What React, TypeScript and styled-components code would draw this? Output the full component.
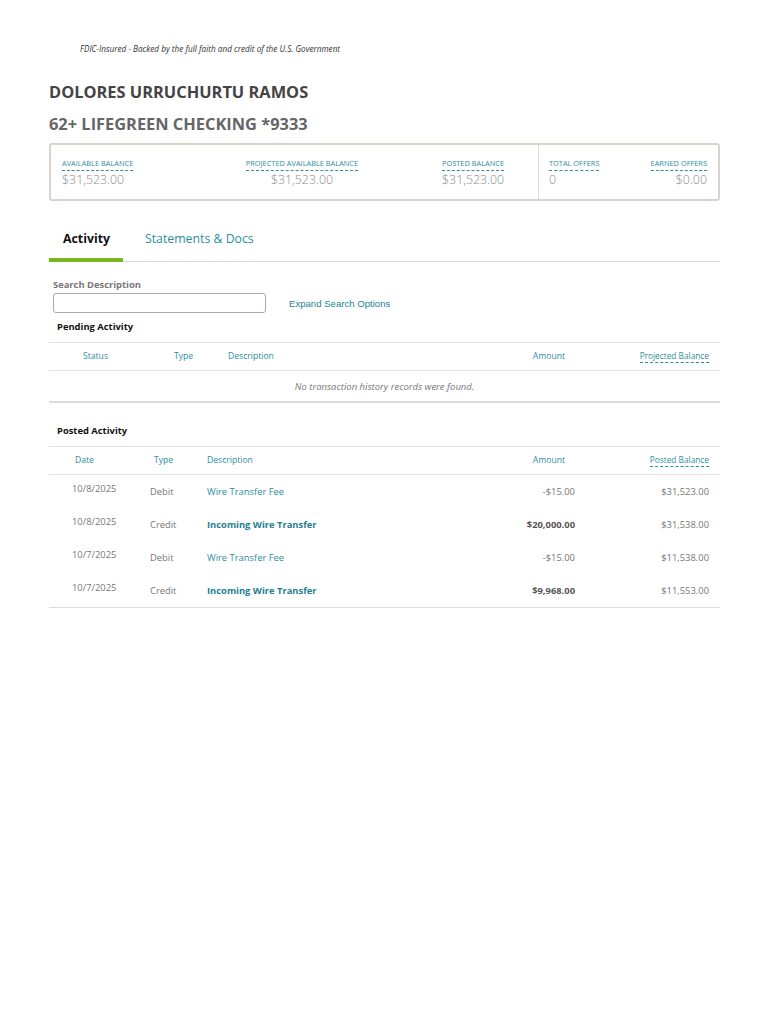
import React from 'react';
import styled, { createGlobalStyle } from 'styled-components';

const GlobalStyle = createGlobalStyle`
  html, body {
    margin: 0;
    padding: 0;
    background: #fff;
    font-family: "Open Sans", "Liberation Sans", sans-serif;
  }
`;

const Page = styled.div`
  width: 768px;
  min-height: 1024px;
  box-sizing: border-box;
  padding: 43px 48px 0 49px;
`;

const Fdic = styled.div`
  font-size: 8.2px;
  font-style: italic;
  color: #333;
  padding-left: 31px;
  line-height: 12px;
`;

const Heading = styled.h1<{ $sub?: boolean }>`
  margin: 0;
  font-size: 16.4px;
  font-weight: 700;
  line-height: 32px;
  color: ${(p) => (p.$sub ? '#666' : '#444')};
`;

const NameHeading = styled(Heading)`
  margin-top: 21px;
`;

const Summary = styled.div`
  margin-top: 3px;
  height: 58px;
  box-sizing: border-box;
  border: 2px solid #d9d3ca;
  border-radius: 3px;
  display: grid;
  grid-template-columns: 487px 1fr;
`;

const SummaryGroup = styled.div<{ $cols: string; $divider?: boolean }>`
  display: grid;
  grid-template-columns: ${(p) => p.$cols};
  align-items: start;
  padding-top: 13px;
  border-left: ${(p) => (p.$divider ? '1px solid #ddd' : 'none')};
`;

const Stat = styled.div<{ $align: string; $pad?: string }>`
  display: flex;
  flex-direction: column;
  align-items: ${(p) => p.$align};
  padding: ${(p) => p.$pad || '0'};
  white-space: nowrap;
`;

const DottedLabel = styled.span<{ $size?: string }>`
  font-size: ${(p) => p.$size || '7.4px'};
  color: #2d8e9e;
  line-height: 11px;
  border-bottom: 1px dashed #2d8e9e;
  padding-bottom: 1px;
  white-space: nowrap;
`;

const StatLabel = styled(DottedLabel)`
  text-transform: uppercase;
`;

const StatValue = styled.span`
  font-size: 12.4px;
  font-weight: 300;
  color: #8a8a8a;
  line-height: 17px;
`;

const Tabs = styled.div`
  margin-top: 23px;
  display: flex;
  border-bottom: 1px solid #d6d6d6;
`;

const Tab = styled.div<{ $active?: boolean }>`
  font-size: 12.3px;
  font-weight: ${(p) => (p.$active ? 700 : 400)};
  color: ${(p) => (p.$active ? '#111' : '#2d8e9e')};
  padding: 6px 13px 11px 14px;
  margin-right: 8px;
  border-bottom: 4px solid ${(p) => (p.$active ? '#7ab51d' : 'transparent')};
  margin-bottom: -1px;
`;

const SearchBlock = styled.div`
  padding: 15px 0 0 4px;
`;

const FieldLabel = styled.div`
  font-size: 9.4px;
  font-weight: 700;
  color: #777;
  line-height: 16px;
`;

const SearchRow = styled.div`
  display: flex;
  align-items: center;
  gap: 23px;
`;

const SearchInput = styled.input`
  width: 213px;
  height: 20px;
  box-sizing: border-box;
  border: 1px solid #aaa;
  border-radius: 3px;
  margin: 0;
`;

const ExpandLink = styled.a`
  font-family: "Liberation Sans", Arial, sans-serif;
  font-size: 9.6px;
  color: #1f8496;
  text-decoration: none;
`;

const SectionTitle = styled.div<{ $top: string }>`
  font-size: 9.4px;
  font-weight: 700;
  color: #111;
  padding: ${(p) => p.$top} 0 0 8px;
  line-height: 14px;
  height: 22px;
`;

const Table = styled.div<{ $cols: string }>`
  display: grid;
  grid-template-columns: ${(p) => p.$cols};
  border-top: 1px solid #e2e2e2;
`;

const HeadCell = styled.div<{ $align?: string; $pad?: string }>`
  height: 28px;
  display: flex;
  align-items: center;
  justify-content: ${(p) => p.$align || 'flex-start'};
  padding: ${(p) => p.$pad || '0'};
  padding-bottom: 1px;
  box-sizing: border-box;
  font-size: 8.6px;
  color: #2d8e9e;
  border-bottom: 1px solid #e2e2e2;
`;

const EmptyRow = styled.div`
  grid-column: 1 / -1;
  height: 30px;
  display: flex;
  align-items: center;
  justify-content: center;
  font-size: 9.5px;
  font-style: italic;
  color: #777;
  border-bottom: 2px solid #dcdcdc;
`;

const Cell = styled.div<{ $align?: string; $pad?: string; $raise?: boolean; $bold?: boolean; $link?: boolean }>`
  height: 33px;
  display: flex;
  align-items: center;
  justify-content: ${(p) => p.$align || 'flex-start'};
  padding: ${(p) => p.$pad || '0'};
  padding-bottom: ${(p) => (p.$raise ? '6px' : '0')};
  box-sizing: border-box;
  font-size: 9.4px;
  font-weight: ${(p) => (p.$bold ? 700 : 400)};
  color: ${(p) => (p.$link ? (p.$bold ? '#1d7f90' : '#2d8e9e') : p.$bold ? '#555' : '#777')};
`;

const TableEnd = styled.div`
  grid-column: 1 / -1;
  border-top: 1px solid #dcdcdc;
`;

const rows = [
  { date: '10/8/2025', type: 'Debit', desc: 'Wire Transfer Fee', amount: '-$15.00', balance: '$31,523.00', credit: false },
  { date: '10/8/2025', type: 'Credit', desc: 'Incoming Wire Transfer', amount: '$20,000.00', balance: '$31,538.00', credit: true },
  { date: '10/7/2025', type: 'Debit', desc: 'Wire Transfer Fee', amount: '-$15.00', balance: '$11,538.00', credit: false },
  { date: '10/7/2025', type: 'Credit', desc: 'Incoming Wire Transfer', amount: '$9,968.00', balance: '$11,553.00', credit: true },
];

const App = () => {
  return (
    <Page>
      <GlobalStyle />
      <Fdic>FDIC-Insured - Backed by the full faith and credit of the U.S. Government</Fdic>
      <NameHeading>DOLORES URRUCHURTU RAMOS</NameHeading>
      <Heading $sub>62+ LIFEGREEN CHECKING *9333</Heading>

      <Summary>
        <SummaryGroup $cols="180px 142px 1fr">
          <Stat $align="flex-start" $pad="0 0 0 11px">
            <StatLabel>Available Balance</StatLabel>
            <StatValue>$31,523.00</StatValue>
          </Stat>
          <Stat $align="center">
            <StatLabel>Projected Available Balance</StatLabel>
            <StatValue>$31,523.00</StatValue>
          </Stat>
          <Stat $align="flex-start" $pad="0 0 0 69px">
            <StatLabel>Posted Balance</StatLabel>
            <StatValue>$31,523.00</StatValue>
          </Stat>
        </SummaryGroup>
        <SummaryGroup $cols="1fr 1fr" $divider>
          <Stat $align="flex-start" $pad="0 0 0 10px">
            <StatLabel>Total Offers</StatLabel>
            <StatValue>0</StatValue>
          </Stat>
          <Stat $align="flex-end" $pad="0 11px 0 0">
            <StatLabel>Earned Offers</StatLabel>
            <StatValue>$0.00</StatValue>
          </Stat>
        </SummaryGroup>
      </Summary>

      <Tabs>
        <Tab $active>Activity</Tab>
        <Tab>Statements &amp; Docs</Tab>
      </Tabs>

      <SearchBlock>
        <FieldLabel>Search Description</FieldLabel>
        <SearchRow>
          <SearchInput type="text" />
          <ExpandLink href="#">Expand Search Options</ExpandLink>
        </SearchRow>
      </SearchBlock>

      <SectionTitle $top="7px">Pending Activity</SectionTitle>
      <Table $cols="125px 54px 1fr 120px 145px">
        <HeadCell $pad="0 0 0 34px">Status</HeadCell>
        <HeadCell>Type</HeadCell>
        <HeadCell>Description</HeadCell>
        <HeadCell $align="flex-end" $pad="0 10px 0 0">Amount</HeadCell>
        <HeadCell $align="flex-end" $pad="0 11px 0 0">
          <DottedLabel $size="8.3px">Projected Balance</DottedLabel>
        </HeadCell>
        <EmptyRow>No transaction history records were found.</EmptyRow>
      </Table>

      <SectionTitle $top="21px">Posted Activity</SectionTitle>
      <Table $cols="101px 57px 1fr 120px 145px">
        <HeadCell $pad="0 0 0 26px">Date</HeadCell>
        <HeadCell $pad="0 0 0 4px">Type</HeadCell>
        <HeadCell>Description</HeadCell>
        <HeadCell $align="flex-end" $pad="0 10px 0 0">Amount</HeadCell>
        <HeadCell $align="flex-end" $pad="0 11px 0 0">
          <DottedLabel $size="8.3px">Posted Balance</DottedLabel>
        </HeadCell>
        {rows.map((r, i) => (
          <React.Fragment key={i}>
            <Cell $pad="0 0 0 23px" $raise>{r.date}</Cell>
            <Cell>{r.type}</Cell>
            <Cell $link $bold={r.credit}>{r.desc}</Cell>
            <Cell $align="flex-end" $bold={r.credit}>{r.amount}</Cell>
            <Cell $align="flex-end" $pad="0 11px 0 0">{r.balance}</Cell>
          </React.Fragment>
        ))}
        <TableEnd />
      </Table>
    </Page>
  );
};

export default App;
